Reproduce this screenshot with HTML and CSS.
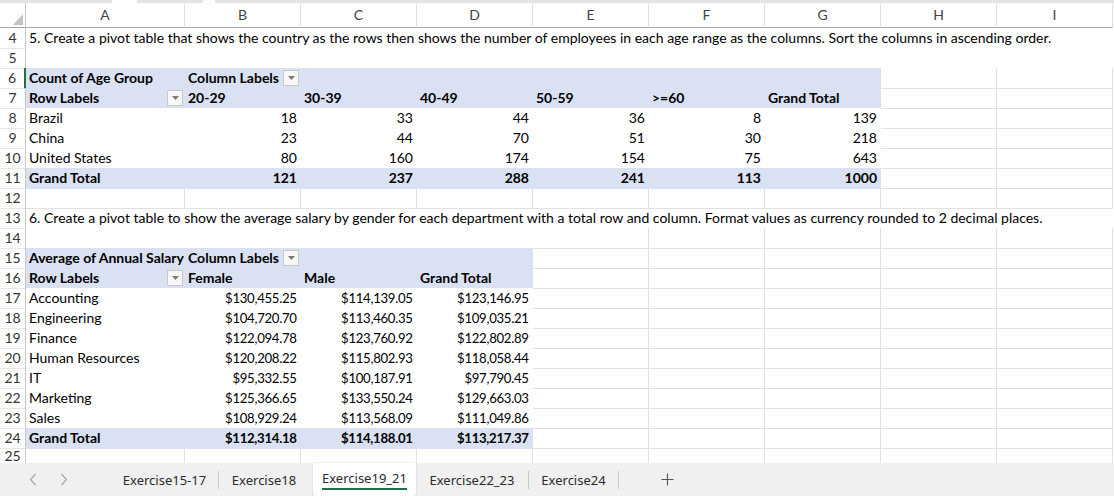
FILE: index.html
```html
<!DOCTYPE html>
<html lang="en">
<head>
<meta charset="utf-8">
<title>Exercise19_21</title>
<link rel="stylesheet" href="styles.css">
</head>
<body>
<div class="top">
  <span class="seg s1"></span><span class="gap g1"></span><span class="seg s2"></span><span class="gap g2"></span><span class="seg s3"></span>
</div>
<div class="sheet">
  <div class="row hdr">
    <div class="corner"><svg width="10" height="11" viewBox="0 0 10 11"><polygon points="10,0 10,11 0,11" fill="#c4c4c4"/></svg></div>
    <div class="ch">A</div><div class="ch">B</div><div class="ch">C</div><div class="ch">D</div><div class="ch">E</div><div class="ch">F</div><div class="ch">G</div><div class="ch">H</div><div class="ch">I</div>
  </div>

  <div class="row"><div class="rh">4</div><div class="c span nb">5. Create a pivot table that shows the country as the rows then shows the number of employees in each age range as the columns. Sort the columns in ascending order.</div></div>
  <div class="row"><div class="rh">5</div><div class="c span nb"></div></div>

  <div class="row"><div class="rh act">6</div>
    <div class="c pv b">Count of Age Group</div>
    <div class="c pv b dd">Column Labels<span class="btn"><svg width="7" height="4" viewBox="0 0 7 4"><polygon points="0,0 7,0 3.5,4" fill="#7a7a7a"/></svg></span></div>
    <div class="c pv"></div><div class="c pv"></div><div class="c pv"></div><div class="c pv"></div><div class="c pv"></div>
    <div class="c"></div><div class="c"></div>
  </div>
  <div class="row"><div class="rh">7</div>
    <div class="c pv b dd bl">Row Labels<span class="btn"><svg width="7" height="4" viewBox="0 0 7 4"><polygon points="0,0 7,0 3.5,4" fill="#7a7a7a"/></svg></span></div>
    <div class="c pv b bl">20-29</div><div class="c pv b bl">30-39</div><div class="c pv b bl">40-49</div><div class="c pv b bl">50-59</div><div class="c pv b bl">&gt;=60</div><div class="c pv b bl">Grand Total</div>
    <div class="c"></div><div class="c"></div>
  </div>
  <div class="row"><div class="rh">8</div>
    <div class="c pw">Brazil</div><div class="c pw n">18</div><div class="c pw n">33</div><div class="c pw n">44</div><div class="c pw n">36</div><div class="c pw n">8</div><div class="c pw n">139</div>
    <div class="c"></div><div class="c"></div>
  </div>
  <div class="row"><div class="rh">9</div>
    <div class="c pw">China</div><div class="c pw n">23</div><div class="c pw n">44</div><div class="c pw n">70</div><div class="c pw n">51</div><div class="c pw n">30</div><div class="c pw n">218</div>
    <div class="c"></div><div class="c"></div>
  </div>
  <div class="row"><div class="rh">10</div>
    <div class="c pw bl">United States</div><div class="c pw n bl">80</div><div class="c pw n bl">160</div><div class="c pw n bl">174</div><div class="c pw n bl">154</div><div class="c pw n bl">75</div><div class="c pw n bl">643</div>
    <div class="c"></div><div class="c"></div>
  </div>
  <div class="row"><div class="rh">11</div>
    <div class="c pv b">Grand Total</div><div class="c pv b n">121</div><div class="c pv b n">237</div><div class="c pv b n">288</div><div class="c pv b n">241</div><div class="c pv b n">113</div><div class="c pv b n">1000</div>
    <div class="c"></div><div class="c"></div>
  </div>
  <div class="row"><div class="rh">12</div>
    <div class="c"></div><div class="c"></div><div class="c"></div><div class="c"></div><div class="c"></div><div class="c"></div><div class="c"></div><div class="c"></div><div class="c"></div>
  </div>
  <div class="row"><div class="rh">13</div><div class="c span nb">6. Create a pivot table to show the average salary by gender for each department with a total row and column. Format values as currency rounded to 2 decimal places.</div></div>
  <div class="row"><div class="rh">14</div><div class="c span4 nb"></div><div class="c nbr"></div><div class="c nbr"></div><div class="c nbr"></div><div class="c nbr"></div><div class="c nbr"></div></div>

  <div class="row"><div class="rh">15</div>
    <div class="c pv b">Average of Annual Salary</div>
    <div class="c pv b dd">Column Labels<span class="btn"><svg width="7" height="4" viewBox="0 0 7 4"><polygon points="0,0 7,0 3.5,4" fill="#7a7a7a"/></svg></span></div>
    <div class="c pv"></div><div class="c pv"></div>
    <div class="c"></div><div class="c"></div><div class="c"></div><div class="c"></div><div class="c"></div>
  </div>
  <div class="row"><div class="rh">16</div>
    <div class="c pv b dd bl">Row Labels<span class="btn"><svg width="7" height="4" viewBox="0 0 7 4"><polygon points="0,0 7,0 3.5,4" fill="#7a7a7a"/></svg></span></div>
    <div class="c pv b bl">Female</div><div class="c pv b bl">Male</div><div class="c pv b bl">Grand Total</div>
    <div class="c"></div><div class="c"></div><div class="c"></div><div class="c"></div><div class="c"></div>
  </div>
  <div class="row"><div class="rh">17</div>
    <div class="c pw">Accounting</div><div class="c pw n m">$130,455.25</div><div class="c pw n m">$114,139.05</div><div class="c pw n m">$123,146.95</div>
    <div class="c"></div><div class="c"></div><div class="c"></div><div class="c"></div><div class="c"></div>
  </div>
  <div class="row"><div class="rh">18</div>
    <div class="c pw">Engineering</div><div class="c pw n m">$104,720.70</div><div class="c pw n m">$113,460.35</div><div class="c pw n m">$109,035.21</div>
    <div class="c"></div><div class="c"></div><div class="c"></div><div class="c"></div><div class="c"></div>
  </div>
  <div class="row"><div class="rh">19</div>
    <div class="c pw">Finance</div><div class="c pw n m">$122,094.78</div><div class="c pw n m">$123,760.92</div><div class="c pw n m">$122,802.89</div>
    <div class="c"></div><div class="c"></div><div class="c"></div><div class="c"></div><div class="c"></div>
  </div>
  <div class="row"><div class="rh">20</div>
    <div class="c pw">Human Resources</div><div class="c pw n m">$120,208.22</div><div class="c pw n m">$115,802.93</div><div class="c pw n m">$118,058.44</div>
    <div class="c"></div><div class="c"></div><div class="c"></div><div class="c"></div><div class="c"></div>
  </div>
  <div class="row"><div class="rh">21</div>
    <div class="c pw">IT</div><div class="c pw n m">$95,332.55</div><div class="c pw n m">$100,187.91</div><div class="c pw n m">$97,790.45</div>
    <div class="c"></div><div class="c"></div><div class="c"></div><div class="c"></div><div class="c"></div>
  </div>
  <div class="row"><div class="rh">22</div>
    <div class="c pw">Marketing</div><div class="c pw n m">$125,366.65</div><div class="c pw n m">$133,550.24</div><div class="c pw n m">$129,663.03</div>
    <div class="c"></div><div class="c"></div><div class="c"></div><div class="c"></div><div class="c"></div>
  </div>
  <div class="row"><div class="rh">23</div>
    <div class="c pw bl">Sales</div><div class="c pw n m bl">$108,929.24</div><div class="c pw n m bl">$113,568.09</div><div class="c pw n m bl">$111,049.86</div>
    <div class="c"></div><div class="c"></div><div class="c"></div><div class="c"></div><div class="c"></div>
  </div>
  <div class="row"><div class="rh">24</div>
    <div class="c pv b">Grand Total</div><div class="c pv b n m">$112,314.18</div><div class="c pv b n m">$114,188.01</div><div class="c pv b n m">$113,217.37</div>
    <div class="c"></div><div class="c"></div><div class="c"></div><div class="c"></div><div class="c"></div>
  </div>
  <div class="row"><div class="rh last">25</div>
    <div class="c"></div><div class="c"></div><div class="c"></div><div class="c"></div><div class="c"></div><div class="c"></div><div class="c"></div><div class="c"></div><div class="c"></div>
  </div>
</div>

<div class="tabs">
  <div class="nav">
    <svg class="arrow" width="8" height="13" viewBox="0 0 8 13"><polyline points="6.5,1 1.5,6.5 6.5,12" fill="none" stroke="#a6a6a6" stroke-width="1.2"/></svg>
    <svg class="arrow" width="8" height="13" viewBox="0 0 8 13"><polyline points="1.5,1 6.5,6.5 1.5,12" fill="none" stroke="#a6a6a6" stroke-width="1.2"/></svg>
  </div>
  <div class="tab t1">Exercise15-17</div>
  <div class="sep"></div>
  <div class="tab t2">Exercise18</div>
  <div class="tab active"><span class="lbl">Exercise19_21</span></div>
  <div class="tab t4">Exercise22_23</div>
  <div class="sep"></div>
  <div class="tab t5">Exercise24</div>
  <div class="sep"></div>
  <div class="plus"><svg width="13" height="13" viewBox="0 0 13 13"><path d="M6.5 0.5v12M0.5 6.5h12" stroke="#555" stroke-width="1.1" fill="none"/></svg></div>
</div>
</body>
</html>
```
FILE: styles.css
```css
html, body {
  margin: 0;
  padding: 0;
}
body {
  width: 1114px;
  height: 496px;
  overflow: hidden;
  background: #ffffff;
  font-family: Lato, "Liberation Sans", sans-serif;
  color: #000;
}

/* top remnants of the formula bar */
.top {
  display: flex;
  height: 3px;
}
.seg { background: #e4e4e4; height: 3px; }
.gap { height: 3px; }
.s1 { width: 112px; }
.g1 { width: 25px; }
.s2 { width: 66px; }
.g2 { width: 12px; }
.s3 { flex: 1; }

.sheet {
  height: 460px;
  overflow: hidden;
}
.row {
  display: grid;
  grid-template-columns: 26px 159px repeat(8, 116px);
  height: 20px;
}
.row.hdr {
  height: 25px;
}

.corner {
  box-sizing: border-box;
  border-right: 1px solid #c8c8c8;
  border-bottom: 1px solid #a8a8a8;
  display: flex;
  align-items: flex-end;
  justify-content: flex-end;
  padding: 0 2px 2px 0;
}
.ch {
  box-sizing: border-box;
  border-right: 1px solid #e1e1e1;
  border-bottom: 1px solid #a8a8a8;
  text-align: center;
  font-size: 14px;
  line-height: 24px;
  color: #444;
}

.rh {
  box-sizing: border-box;
  border-right: 1px solid #c8c8c8;
  border-bottom: 1px solid #e6e6e6;
  text-align: center;
  font-size: 14px;
  line-height: 20px;
  color: #333;
}
.rh.act {
  border-right: 2px solid #1e7145;
}
.rh.last {
  line-height: 15px;
}

.c {
  box-sizing: border-box;
  border-right: 1px solid #e1e1e1;
  border-bottom: 1px solid #e1e1e1;
  padding: 0 3px;
  font-size: 14px;
  line-height: 20px;
  white-space: nowrap;
  overflow: hidden;
}
.span {
  grid-column: 2 / span 9;
  overflow: visible;
}
.span4 {
  grid-column: 2 / span 4;
}
.nb {
  border-color: transparent;
}
.nbr {
  border-right-color: #e1e1e1;
}
.pv {
  background: #d9e1f2;
  border-color: transparent;
}
.pw {
  background: #ffffff;
  border-color: transparent;
}
.bl {
  border-bottom-color: #8ea9db;
}
.b {
  font-weight: 700;
}
.n {
  text-align: right;
}
.m {
  font-size: 13.2px;
  letter-spacing: -0.3px;
  padding-right: 3.3px;
}
.dd {
  display: flex;
  align-items: center;
  justify-content: space-between;
  padding-right: 1px;
}
.btn {
  box-sizing: border-box;
  width: 16px;
  height: 16px;
  border: 1px solid #c9c9c9;
  background: #f7f7f7;
  display: flex;
  align-items: center;
  justify-content: center;
}

/* sheet tabs */
.tabs {
  height: 33px;
  background: #f0f0f0;
  display: flex;
  align-items: center;
  font-family: "Noto Sans", "Open Sans", sans-serif;
  font-size: 13px;
  color: #2b2b2b;
}
.nav {
  width: 111px;
  display: flex;
  align-items: center;
  padding-left: 29px;
  box-sizing: border-box;
  gap: 23px;
}
.tab {
  height: 33px;
  display: flex;
  align-items: center;
  justify-content: center;
}
.t1 { width: 107px; }
.t2 { width: 90px; margin-right: 4px; }
.active {
  width: 103px;
  background: #ffffff;
  box-shadow: 0 0 2px rgba(0,0,0,0.18);
  border-radius: 0 0 3px 3px;
}
.active .lbl {
  display: inline-block;
  border-bottom: 2px solid #1e7145;
  line-height: 19px;
  margin-top: -1px;
}
.t4 { width: 112px; }
.t5 { width: 89px; }
.sep {
  width: 1px;
  height: 18px;
  background: #c8c8c8;
}
.plus {
  margin-left: 42px;
  display: flex;
  align-items: center;
}
```
